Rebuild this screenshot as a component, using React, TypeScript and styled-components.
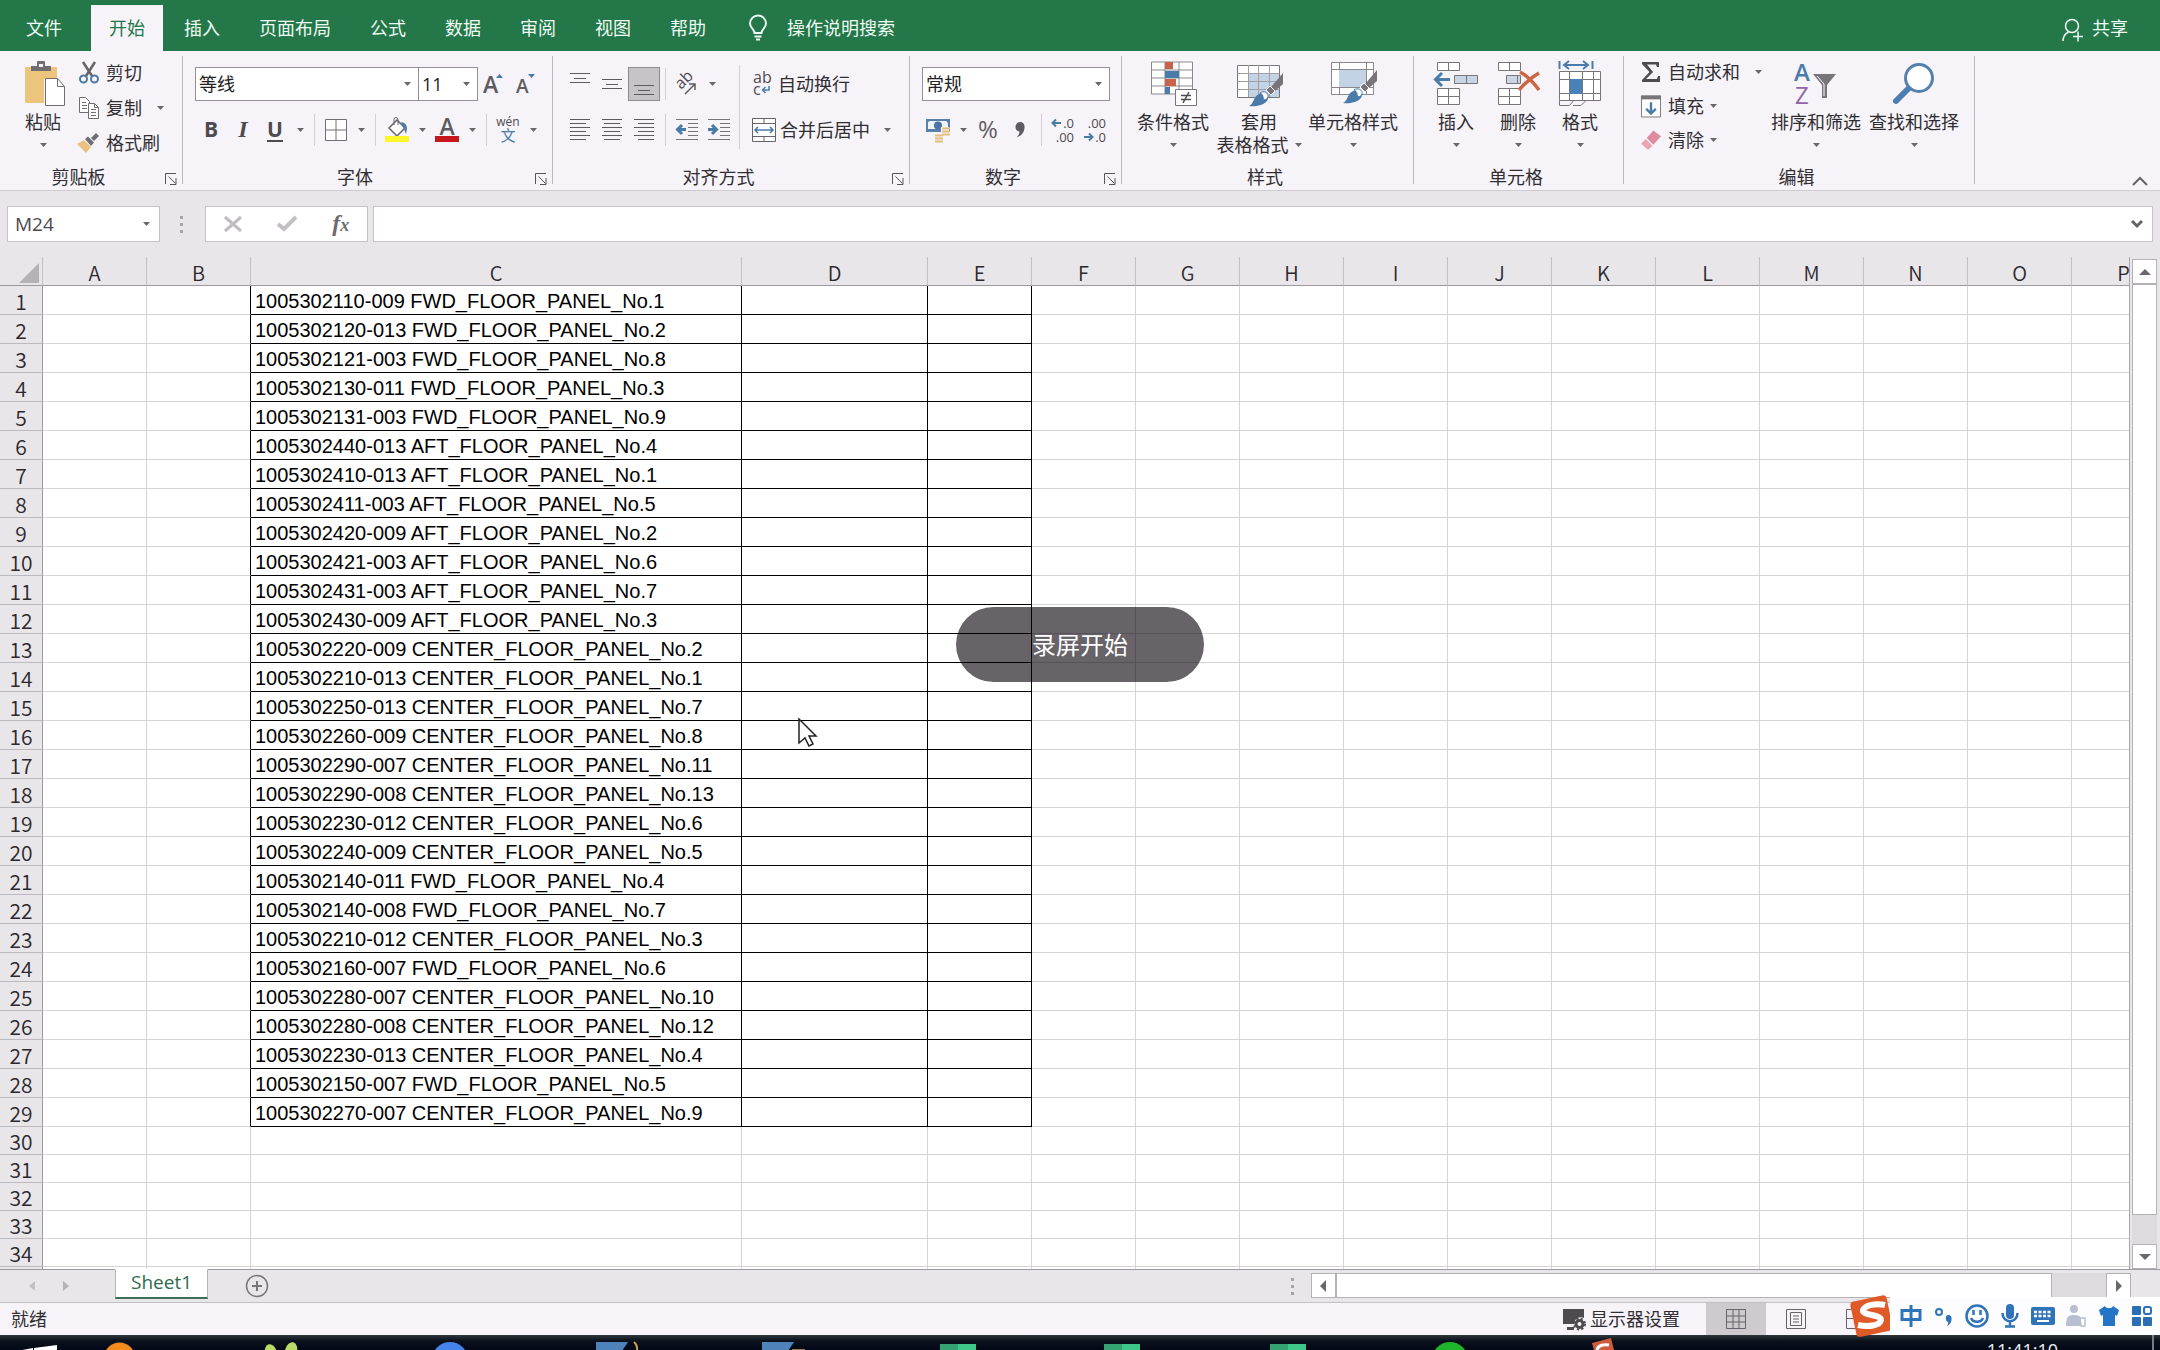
import React from "react";
import styled, { createGlobalStyle } from "styled-components";

const UI_FONT = '"Open Sans", "Noto Sans CJK SC", sans-serif';
const SHEET_FONT = '"Noto Sans CJK SC", sans-serif';
const GREEN = "#237749";
const BLUE = "#4a7ba6";
const INK = "#5f5c61";
const CHROME = "#e9e6ea";
const RIBBON = "#f7f4f9";

const GlobalStyle = createGlobalStyle`
  *, *::before, *::after { box-sizing: border-box; }
  body { margin: 0; overflow: hidden; }
  button, input, select {
    margin: 0; padding: 0; border: 0; background: none;
    font: inherit; color: inherit; outline: none; appearance: none;
  }
  svg { display: block; flex: none; overflow: visible; }
`;

const Window = styled.div`
  display: flex;
  flex-direction: column;
  height: 100vh;
  overflow: hidden;
  background: ${CHROME};
  color: #302e33;
  font: 18px/24px ${UI_FONT};
`;

/* ---------- title tabs ---------- */

const TabStrip = styled.nav`
  display: flex;
  align-items: stretch;
  height: 51px;
  flex: none;
  padding-top: 5px;
  background: ${GREEN};
  color: #eefbf2;
`;

const FileTab = styled.button`
  padding: 0 29px 0 26px;
`;

const Tab = styled.button<{ $active?: boolean }>`
  padding: 0 18px;
  margin-right: 3px;
  background: ${(p) => (p.$active ? RIBBON : "transparent")};
  color: ${(p) => (p.$active ? GREEN : "inherit")};
`;

const TellMe = styled.button`
  display: flex;
  align-items: center;
  gap: 20px;
  margin-left: 22px;
`;

const Share = styled.button`
  display: flex;
  align-items: center;
  gap: 8px;
  margin-left: auto;
  margin-right: 32px;
`;

/* ---------- ribbon ---------- */

const Ribbon = styled.div`
  display: flex;
  flex: none;
  height: 140px;
  padding-top: 4px;
  background: ${RIBBON};
  border-bottom: 1px solid #cfccd1;
`;

const GroupBox = styled.section<{ $width: number }>`
  display: flex;
  flex-direction: column;
  width: ${(p) => p.$width}px;
  flex: none;
`;

const GroupBody = styled.div<{ $pad: number }>`
  display: flex;
  height: 105px;
  padding-left: ${(p) => p.$pad}px;
`;

const GroupFooter = styled.div`
  display: flex;
  align-items: center;
  height: 30px;
  padding: 3px 5px 0 0;
`;

const GroupName = styled.span`
  flex: 1;
  text-align: center;
`;

const Launcher = styled.button`
  width: 12px;
  height: 12px;
  margin: 4px 0 0 8px;
`;

const GroupDivider = styled.div`
  width: 1px;
  height: 128px;
  margin-top: 1px;
  flex: none;
  background: #bab7bc;
`;

const Rows = styled.div`
  display: flex;
  flex-direction: column;
  gap: 10px;
  padding-top: 12px;
`;

const ToolRow = styled.div<{ $low?: boolean }>`
  display: flex;
  align-items: center;
  height: ${(p) => (p.$low ? 38 : 34)}px;
`;

const Tool = styled.button<{ $active?: boolean }>`
  display: flex;
  align-items: center;
  justify-content: center;
  width: 32px;
  height: 34px;
  border: 1px solid ${(p) => (p.$active ? "#8d8b8f" : "transparent")};
  background: ${(p) => (p.$active ? "#c6c4c8" : "none")};
`;

const DropTool = styled(Tool)`
  width: 18px;
`;

const TextTool = styled.button`
  display: flex;
  align-items: center;
  gap: 4px;
  padding-left: 8px;
`;

const Letter = styled.span<{ $kind: "b" | "i" | "u" }>`
  font-family: ${(p) => (p.$kind === "i" ? '"Liberation Serif", serif' : UI_FONT)};
  font-size: ${(p) => (p.$kind === "i" ? 24 : 21)}px;
  font-weight: 700;
  font-style: ${(p) => (p.$kind === "i" ? "italic" : "normal")};
  line-height: 22px;
  border-bottom: 2px solid ${(p) => (p.$kind === "u" ? "#4d4a50" : "transparent")};
  color: #4d4a50;
`;

const ThinDivider = styled.div<{ $tall?: boolean }>`
  width: 1px;
  height: ${(p) => (p.$tall ? 84 : 32)}px;
  margin: ${(p) => (p.$tall ? "10px 4px 0" : "0 5px")};
  background: #d3d0d5;
`;

const SelectBox = styled.label<{ $width: number; $joined?: boolean }>`
  display: flex;
  align-items: center;
  width: ${(p) => p.$width}px;
  height: 34px;
  padding: 0 7px 0 3px;
  margin-left: ${(p) => (p.$joined ? -1 : 0)}px;
  background: #fff;
  border: 1px solid #949196;
  select { flex: 1; min-width: 0; height: 32px; color: #222; }
`;

const LargeButton = styled.button<{ $width: number }>`
  display: flex;
  flex-direction: column;
  align-items: center;
  width: ${(p) => p.$width}px;
  padding-top: 5px;
  white-space: nowrap;
`;

const LargeIcon = styled.span`
  display: flex;
  align-items: center;
  height: 48px;
  margin-bottom: 2px;
`;

const LargeLine = styled.span`
  display: flex;
  align-items: center;
  gap: 6px;
  height: 23px;
`;

const Stack = styled.div<{ $width: number; $row: number }>`
  display: flex;
  flex-direction: column;
  width: ${(p) => p.$width}px;
  > button { height: ${(p) => p.$row}px; }
`;

const SmallButton = styled.button<{ $gap?: number }>`
  display: flex;
  align-items: center;
  white-space: nowrap;
  span { margin: 0 ${(p) => p.$gap ?? 6}px 0 7px; }
`;

const Collapse = styled.button`
  margin: 118px 12px 0 auto;
  width: 16px;
  height: 16px;
`;

/* ---------- formula bar ---------- */

const FormulaBar = styled.div`
  display: flex;
  flex: none;
  height: 66px;
  padding: 15px 7px;
  color: #4b484e;
`;

const Field = styled.label<{ $width?: number }>`
  display: flex;
  align-items: center;
  justify-content: space-between;
  ${(p) => (p.$width ? `width: ${p.$width}px; flex: none;` : "flex: 1;")}
  padding: 0 9px 0 7px;
  background: #fff;
  border: 1px solid #c6c3c8;
  input { flex: 1; min-width: 0; font-size: 19px; }
`;

const Grip = styled.div<{ $margin: string }>`
  display: flex;
  flex-direction: column;
  justify-content: center;
  gap: 4px;
  margin: ${(p) => p.$margin};
  &::before, &::after { content: ""; }
  i, &::before, &::after { width: 3px; height: 3px; background: #a7a4a9; }
`;

const FormulaButtons = styled.div`
  display: flex;
  align-items: center;
  justify-content: space-around;
  width: 163px;
  margin-right: 5px;
  background: #fff;
  border: 1px solid #c6c3c8;
`;

const Fx = styled.span`
  font: italic 700 24px/24px "Liberation Serif", serif;
  color: #6d6a70;
  small { font-size: 18px; }
`;

/* ---------- sheet ---------- */

const SheetArea = styled.div`
  display: flex;
  flex: 1;
  min-height: 0;
`;

const GridPane = styled.div`
  flex: 1;
  min-width: 0;
  overflow: hidden;
  border-right: 1px solid #aaa7ac;
`;

const Grid = styled.table`
  table-layout: fixed;
  width: 0;
  border-collapse: separate;
  border-spacing: 0;
  background: #fff;
  font: 20px/25px ${SHEET_FONT};
  color: #2b292e;
  th { padding: 2px 0 0; font-weight: 350; background: ${CHROME}; text-align: center; }
`;

const HeadCell = styled.th`
  height: 29px;
  border-right: 1px solid #c3c0c5;
  border-bottom: 1px solid #9d9a9f;
`;

const CornerMark = styled.svg`
  margin: 1px 3px 0 auto;
`;

const RowHead = styled.th`
  font-size: 21px;
  border-right: 1px solid #9d9a9f;
  border-bottom: 1px solid #bdbabf;
`;

const Row = styled.tr<{ $tall: boolean }>`
  height: ${(p) => (p.$tall ? 29 : 28)}px;
`;

const Cell = styled.td<{ $right: boolean; $bottom: boolean }>`
  padding: 2px 0 0 4px;
  overflow: hidden;
  white-space: nowrap;
  font: 20px/25px "Liberation Sans", Arial, sans-serif;
  color: #000;
  border-right: 1px solid ${(p) => (p.$right ? "#000" : "#d4d4d4")};
  border-bottom: 1px solid ${(p) => (p.$bottom ? "#000" : "#d4d4d4")};
`;

const VScroll = styled.div`
  display: flex;
  flex-direction: column;
  width: 30px;
  padding: 2px 3px 0 2px;
`;

const ScrollButton = styled.button`
  display: flex;
  align-items: center;
  justify-content: center;
  width: 25px;
  height: 25px;
  flex: none;
  background: #fff;
  border: 1px solid #b5b2b7;
`;

const Track = styled.div<{ $vertical?: boolean }>`
  display: flex;
  flex: 1;
  flex-direction: ${(p) => (p.$vertical ? "column" : "row")};
  background: #dedbdf;
`;

const Thumb = styled.div<{ $share: number }>`
  flex: 0 0 ${(p) => p.$share}%;
  background: #fff;
  border: 1px solid #b5b2b7;
`;

/* ---------- sheet tabs ---------- */

const SheetBar = styled.div`
  display: flex;
  align-items: stretch;
  flex: none;
  height: 34px;
  padding-right: 29px;
  border-top: 1px solid #9d9a9f;
  border-bottom: 1px solid #c3c0c5;
`;

const NavArrows = styled.div`
  display: flex;
  align-items: center;
  gap: 28px;
  width: 115px;
  padding-left: 29px;
`;

const SheetTab = styled.button`
  width: 93px;
  height: 30px;
  margin-top: -1px;
  padding-bottom: 4px;
  background: #fff;
  border: 1px solid #b5b2b7;
  border-top-color: #fff;
  border-bottom: 2px solid #3b6e54;
  color: #2f6b4c;
  font-size: 19px;
`;

const AddSheet = styled.button`
  margin-left: 37px;
`;

const HScroll = styled.div`
  display: flex;
  width: 38.5%;
  height: 25px;
  margin-top: 3px;
`;

/* ---------- status bar ---------- */

const StatusBar = styled.footer`
  display: flex;
  align-items: center;
  flex: none;
  height: 32px;
  padding: 0 274px 0 11px;
  background: ${RIBBON};
`;

const DisplaySettings = styled.button`
  display: flex;
  align-items: center;
  gap: 4px;
  margin-left: auto;
  margin-right: 26px;
`;

const ViewButton = styled.button<{ $active?: boolean }>`
  display: flex;
  align-items: center;
  justify-content: center;
  width: 60px;
  height: 32px;
  background: ${(p) => (p.$active ? "#cecad0" : "none")};
`;

const ImeBar = styled.div`
  position: absolute;
  right: 0;
  bottom: 13px;
  display: flex;
  align-items: center;
  height: 42px;
`;

const ImeTools = styled.div`
  display: flex;
  align-items: center;
  height: 38px;
  margin-left: -4px;
  padding: 0 2px 0 4px;
  background: #fdfcfe;
`;

const ImeButton = styled.button`
  display: flex;
  align-items: center;
  justify-content: center;
  width: 33px;
  height: 34px;
`;

const Taskbar = styled.div`
  position: relative;
  flex: none;
  height: 15px;
  overflow: hidden;
  background: linear-gradient(#30363c, #0a111c 6px, #020816);
`;

const TaskIcon = styled.span<{ $x: number; $top: number }>`
  position: absolute;
  left: ${(p) => p.$x}%;
  top: ${(p) => p.$top}px;
`;

const Clock = styled.time`
  position: absolute;
  right: 102px;
  top: 3px;
  color: #eceef2;
  font: 18px/24px ${UI_FONT};
`;

const Peek = styled.span`
  position: absolute;
  right: 6px;
  top: 0;
  width: 2px;
  height: 15px;
  background: #777d86;
`;

const Toast = styled.div`
  position: absolute;
  left: 50%;
  top: 45%;
  transform: translate(-50%, -1px);
  padding: 19px 76px 20px;
  border-radius: 38px;
  background: rgba(6, 0, 8, 0.61);
  color: #fff;
  font: 24px/36px ${SHEET_FONT};
  white-space: nowrap;
`;

const Pointer = styled.svg`
  position: absolute;
  left: 797px;
  top: 717px;
`;

/* ---------- icons ---------- */

const Caret = () => (
  <svg width="7" height="4" viewBox="0 0 7 4"><path d="M0 0h7L3.500 4z" fill="#6a676c" /></svg>
);

const Arrow = ({ dir, color = "#6a676c" }: { dir: number; color?: string }) => (
  <svg width="12" height="12" viewBox="-6 -6 12 12">
    <path d="M-6 3L0 -3L6 3z" fill={color} transform={`rotate(${dir})`} />
  </svg>
);

const LauncherIcon = () => (
  <svg width="12" height="12" fill="none" stroke="#59565b">
    <path d="M.5 11V.5H11M3.500 3.500l7 7M11 5v6.500H5" />
  </svg>
);

const BulbIcon = () => (
  <svg width="18" height="26" viewBox="0 0 18 26" fill="none" stroke="#eefbf2" strokeWidth="2">
    <path d="M5.500 18c0-4-4.500-5-4.500-9.500a8 8 0 0116 0c0 4.500-4.500 5.500-4.500 9.500z" />
    <path d="M5.500 21.500h7M7 24.500h4" />
  </svg>
);

const ShareIcon = () => (
  <svg width="22" height="20" viewBox="0 2 22 20" fill="none" stroke="#eefbf2" strokeWidth="1.500">
    <circle cx="10" cy="10" r="6.500" />
    <path d="M1 25c0-5 2.500-7.500 5.500-9M16 15.500v10M11 20.500h10" />
  </svg>
);

const PasteIcon = () => (
  <svg width="42" height="46" viewBox="-2 0 42 46">
    <path d="M2 6h30a1 1 0 011 1v11H20v24H2a1 1 0 01-1-1V7a1 1 0 011-1z" fill="#ecc57d" />
    <path d="M7 10V5h6V1a1 1 0 011-1h6a1 1 0 011 1v4h6v5z" fill="#716e73" />
    <rect x="15" y="3" width="4" height="3" fill="#f7f4f9" />
    <path d="M21.500 17.500h12l7 8v19h-19z" fill="#fff" stroke="#716e73" />
    <path d="M33.500 17.500v8h7" fill="none" stroke="#716e73" />
  </svg>
);

const CutIcon = () => (
  <svg width="20" height="22" viewBox="0 0 20 22" fill="none">
    <path d="M4 0l9 14M16 0L7 14" stroke="#66636a" strokeWidth="2.500" />
    <circle cx="4.500" cy="17" r="3.500" stroke={BLUE} strokeWidth="2" />
    <circle cx="15.500" cy="17" r="3.500" stroke={BLUE} strokeWidth="2" />
  </svg>
);

const CopyIcon = () => (
  <svg width="20" height="22" viewBox="0 0 20 22" fill="#fff" stroke="#716e73">
    <path d="M.5.500h6l4 4v11H.5zM3 5.500h4M3 8.500h5M3 11.500h5" />
    <path d="M9.500 6.500h6l4 4v11h-10zM15.500 6.500v4h4M12 12.500h5M12 15.500h5M12 18.500h5" />
  </svg>
);

const BrushIcon = () => (
  <svg width="22" height="20" viewBox="0 0 22 20">
    <path d="M0 11l7-4 7 7-5 6z" fill="#eac180" />
    <path d="M8 6l3-2.500 6 6L14 13z" fill="#716e73" />
    <path d="M14 5l5-5 3 3-5 5z" fill="#716e73" />
  </svg>
);

const GrowFont = ({ small }: { small?: boolean }) => (
  <svg width="24" height="28" viewBox="0 0 24 28">
    <text x={small ? 2 : 1} y="23" fontSize={small ? 19 : 23} fontWeight="600" fill={INK} fontFamily="Open Sans">A</text>
    {small ? <path d="M14 4h7l-3.500 4z" fill={BLUE} /> : <path d="M14 8h7l-3.500-4z" fill={BLUE} />}
  </svg>
);

const BordersIcon = () => (
  <svg width="22" height="22" fill="#fff" stroke="#716e73"><path d="M.5.500h21v21H.5zM11 0v22M0 11h22" /></svg>
);

const FillIcon = () => (
  <svg width="24" height="26" viewBox="0 0 24 26">
    <path d="M4 11l8-8 8 8-8 8z" fill="#fff" stroke="#66636a" strokeWidth="1.500" />
    <path d="M9 8V2.500a2 2 0 014 0V8" fill="none" stroke="#66636a" />
    <path d="M16 5c6 1 7 5 5 12l-2-5z" fill={BLUE} />
    <rect y="19" width="24" height="6" fill="#fdf62b" />
  </svg>
);

const FontColorIcon = () => (
  <svg width="24" height="26" viewBox="0 0 24 26">
    <text x="12" y="18" textAnchor="middle" fontSize="23" fontWeight="600" fill={INK} fontFamily="Open Sans">A</text>
    <rect y="19" width="24" height="6" fill="#c8161d" />
  </svg>
);

const PhoneticIcon = () => (
  <svg width="24" height="28" viewBox="0 0 24 28">
    <text x="12" y="10" textAnchor="middle" fontSize="12" fill="#4d4a50" fontFamily="Open Sans">wén</text>
    <text x="12" y="25" textAnchor="middle" fontSize="15" fill={BLUE} fontFamily="Noto Sans CJK SC">文</text>
  </svg>
);

const LinesIcon = ({ lines }: { lines: [number, number, number][] }) => (
  <svg width="20" height="24" stroke="#5f5c61">
    {lines.map(([x, y, w]) => <path key={y} d={`M${x} ${y + 0.5}h${w}`} />)}
  </svg>
);

const paragraph = (shift: (w: number) => number): [number, number, number][] =>
  [20, 16, 20, 16, 20, 16].map((w, i) => [shift(w), 1 + i * 4, w]);

const IndentIcon = ({ out }: { out?: boolean }) => (
  <svg width="22" height="24" viewBox="0 0 22 24" fill="none">
    <path d="M0 1.500h22M12 5.500h10M12 9.500h10M12 13.500h10M12 17.500h10M0 21.500h22" stroke="#77747a" />
    <path d={out ? "M10 11.500H2M6 7l-4.500 4.500L6 16" : "M0 11.500h8M4 7l4.500 4.500L4 16"} stroke={BLUE} strokeWidth="3" />
  </svg>
);

const OrientIcon = () => (
  <svg width="24" height="24" viewBox="0 0 24 24">
    <text x="0" y="0" fontSize="16" fill="#4d4a50" fontFamily="Open Sans" transform="translate(6 18) rotate(-45)">ab</text>
    <path d="M10 22L20 12M20 18v-6h-6" fill="none" stroke="#5f5c61" strokeWidth="1.500" />
  </svg>
);

const WrapIcon = () => (
  <svg width="22" height="26" viewBox="0 0 22 26">
    <text x="1" y="12" fontSize="16" fill="#4d4a50" fontFamily="Open Sans">ab</text>
    <text x="1" y="24" fontSize="16" fill="#4d4a50" fontFamily="Open Sans">c</text>
    <path d="M17 15v4h-6M13.500 16l-3 3 3 3" fill="none" stroke={BLUE} strokeWidth="1.500" />
  </svg>
);

const MergeIcon = () => (
  <svg width="24" height="24" viewBox="0 0 24 24" fill="none">
    <path d="M.5.500h23v23H.500zM.5 5.500h23M.5 18.500h23M12 0v5M12 19v5" fill="#fff" stroke="#66636a" />
    <path d="M3 12h18M6 9l-3 3 3 3M18 9l3 3-3 3" stroke={BLUE} strokeWidth="1.500" />
  </svg>
);

const MoneyIcon = () => (
  <svg width="24" height="24" viewBox="0 0 24 24">
    <path d="M0 1h24v13H0z" fill="#5b80a8" />
    <path d="M2 4l2-1h16l2 2v6H2z" fill="#eef3f8" />
    <circle cx="12" cy="7.500" r="4" fill="#4a74a3" />
    <path d="M15 9h8v10h-6v4H8v-7h7z" fill="#f7f4f9" />
    <path d="M16 10.500h8M16 13.500h8M16 16.500h8M9 17.500h8M9 20.500h8M9 23.500h8" stroke="#e3be7c" strokeWidth="2" />
  </svg>
);

const PercentIcon = () => (
  <svg width="24" height="26" viewBox="0 0 24 26">
    <text x="12" y="21" textAnchor="middle" fontSize="24" fill="#5f5c61" fontFamily="Open Sans">%</text>
  </svg>
);

const CommaIcon = () => (
  <svg width="10" height="16" viewBox="0 0 10 16"><path d="M5 0c3 0 5 2 4.500 6C9 11 6 14 1.500 15.500c2-2 3-4 3-6C2 9.500.5 7.500.5 5S2.500 0 5 0z" fill={INK} /></svg>
);

const DecimalIcon = ({ less }: { less?: boolean }) => (
  <svg width="24" height="26" viewBox="1 0 24 26" fontFamily="Open Sans" fontSize="13" fill="#4d4a50">
    <text x="24" y="11" textAnchor="end">{less ? ".00" : ".0"}</text>
    <text x="24" y="25" textAnchor="end">{less ? ".0" : ".00"}</text>
    <path d={less ? "M2 20h8M7 16.500l3.500 3.500L7 23.500" : "M11 6H3M6 2.500L2.500 6 6 9.500"} fill="none" stroke={BLUE} strokeWidth="2" />
  </svg>
);

const CondFormatIcon = () => (
  <svg width="46" height="46" viewBox="-1 0 46 46">
    <path d="M.5 1h41v32H.500zM.5 9h41M.5 17h41M.5 25h41M14 1v32M28 1v32" fill="#fff" stroke="#8b888d" />
    <path d="M14 1h8v7h-8zM14 18h11v7H14z" fill="#c8634a" />
    <path d="M14 10h14v7H14zM14 26h5v7h-5z" fill="#4a7bab" />
    <path d="M24.500 28.500h21v16h-21z" fill="#fff" stroke="#77747a" />
    <path d="M30 34.500h10M30 38.500h10M38 31l-6 11" stroke="#4d4a50" strokeWidth="1.500" />
  </svg>
);

const Paintbrush = () => (
  <g>
    <path d="M46 12v11l-8 7-4-4z" fill="#77747a" />
    <path d="M33 25l5 5-4 4-5-5z" fill="#77747a" stroke="#fff" />
    <path d="M12 45c5-2 4-9 10-12 5-2 10 1 9 5-2 6-12 8-19 7z" fill="#4a7bab" />
    <path d="M23 32c4-3 9 0 8 4-2 4-5 3-5 0 0-2-1-3-3-4z" fill="#fff" stroke="#4a7bab" />
  </g>
);

const TableFormatIcon = () => (
  <svg width="46" height="46" viewBox="-1 0 46 46">
    <path d="M.5 4.500h42v32h-42z" fill="#fff" stroke="#77747a" />
    <path d="M11 12h31v24H11z" fill="#c3d3e6" />
    <path d="M.5 12.500h42M.5 20.500h42M.5 28.500h42M11.500 4v32M21.500 4v32M32.500 4v32" stroke="#a19ea4" />
    <Paintbrush />
  </svg>
);

const CellStyleIcon = () => (
  <svg width="46" height="46" viewBox="-1 0 46 46">
    <path d="M.5 1.500h42v32h-42zM.5 8.500h42M.5 26.500h42M8.500 1v32M35.500 1v32" fill="#fff" stroke="#8b888d" />
    <path d="M8 9h27v17H8z" fill="#c3d3e6" />
    <g transform="translate(0 -3)"><Paintbrush /></g>
  </svg>
);

const InsertIcon = () => (
  <svg width="46" height="46" viewBox="0 0 46 46" fill="#fff" stroke="#77747a">
    <path d="M4.500 1.500h22v8h-22zM15.500 1v8M4.500 27.500h22v16h-22zM4.500 35.500h22M15.500 27v16" />
    <path d="M21.500 14.500h23v8h-23zM33.500 14v8" fill="#c9d4e4" />
    <path d="M17 18.500H3M9 12l-6.500 6.500L9 25" fill="none" stroke="#4a7bab" strokeWidth="3" />
  </svg>
);

const DeleteIcon = () => (
  <svg width="46" height="46" viewBox="0 0 46 46" fill="#fff" stroke="#77747a">
    <path d="M3.500 1.500h22v8h-22zM14.500 1v8M3.500 27.500h22v16h-22zM3.500 35.500h22M14.500 27v16" />
    <path d="M11.500 14.500h14v8h-14zM22.500 14v8" fill="#c9d4e4" />
    <path d="M25 11c6 3 13 10 19 18M44 12c-7 4-14 10-20 17" fill="none" stroke="#cc6544" strokeWidth="3.500" />
  </svg>
);

const FormatIcon = () => (
  <svg width="46" height="46" viewBox="1 0 46 46" fill="#fff" stroke="#77747a">
    <path d="M3.500 10.500h41v29h-41zM3.500 18.500h41M3.500 32.500h41M13.500 10v29M26.500 10v29M37.500 10v29" />
    <path d="M3.500 39.500v5h10l4-5M17 44.500h8l5-5" fill="none" />
    <path d="M14 18h12v15H14z" fill="#4a80b8" stroke="none" />
    <path d="M3.500 0v8M36.500 0v8M8 4h24M13 0L8 4l5 4M27 0l5 4-5 4" fill="none" stroke="#4a7bab" strokeWidth="2" />
  </svg>
);

const SigmaIcon = () => (
  <svg width="20" height="20" viewBox="0 0 20 20">
    <path d="M1 0h17v5h-2l-1-2.500H6L12 10l-7 7h11l1-3h2v6H1v-2l7.500-8L1 2z" fill="#4d4a50" />
  </svg>
);

const FillDownIcon = () => (
  <svg width="20" height="23" viewBox="0 0 21 23" fill="none">
    <path d="M.5.500h20v22H.500z" fill="#fff" stroke="#77747a" />
    <path d="M0 0h21v4H0z" fill="#77747a" />
    <path d="M10.500 7v12M5.500 14l5 5 5-5" stroke={BLUE} strokeWidth="2.500" />
  </svg>
);

const EraserIcon = () => (
  <svg width="20" height="20" viewBox="0 0 21 20">
    <path d="M13 0l8 6-8 9-7-7z" fill="#df8ba0" />
    <path d="M5 9l7 7-4 4-1 0-7-6z" fill="#e8a5b4" />
  </svg>
);

const SortIcon = () => (
  <svg width="44" height="42" viewBox="0 0 44 42" fontFamily="Open Sans" fontSize="24" fontWeight="600">
    <text x="0" y="18" fill="#4a7bab">A</text>
    <text x="1" y="41" fontWeight="400" fill="#9263a8">Z</text>
    <path d="M19 11h23L33 22v13h-5V22z" fill="#77747a" />
    <path d="M23 13l7 8v12" fill="none" stroke="#fff" />
  </svg>
);

const FindIcon = () => (
  <svg width="42" height="42" viewBox="0 0 42 42" fill="none">
    <path d="M17 24L3 38" stroke="#4d7eb3" strokeWidth="6" strokeLinecap="round" />
    <circle cx="26" cy="15" r="13.500" fill="#fff" stroke="#5580ad" strokeWidth="3" />
  </svg>
);

const CrossIcon = () => (
  <svg width="18" height="16" fill="none" stroke="#bfbcc1" strokeWidth="3"><path d="M1 1l16 14M17 1L1 15" /></svg>
);

const CheckIcon = () => (
  <svg width="20" height="16" fill="none" stroke="#c3c0c5" strokeWidth="4"><path d="M1 8l6 5L19 1" /></svg>
);

const Chevron = ({ up }: { up?: boolean }) => (
  <svg width={up ? 16 : 12} height="9" viewBox={up ? "0 0 16 9" : "0 0 12 9"} fill="none" stroke="#66636a" strokeWidth={up ? 2 : 3}>
    <path d={up ? "M1 8l7-7 7 7" : "M1 1l5 5 5-5"} />
  </svg>
);

const DisplayIcon = () => (
  <svg width="23" height="21" viewBox="0 0 23 21">
    <path d="M0 0h21v9a7 7 0 00-10 6H0z" fill="#4d4a50" />
    <path d="M4 18h7v3H4z" fill="#4d4a50" />
    <circle cx="16.500" cy="15" r="3.500" fill="none" stroke="#4d4a50" strokeWidth="3" />
    <circle cx="16.500" cy="15" r="5.500" fill="none" stroke="#4d4a50" strokeWidth="2" strokeDasharray="2.200 2.200" />
  </svg>
);

const NormalView = () => (
  <svg width="20" height="20" fill="none" stroke="#66636a"><path d="M.5.500h19v19H.500zM.5 7h19M.5 13h19M7 0v20M13 0v20" /></svg>
);
const PageView = () => (
  <svg width="20" height="20" fill="none" stroke="#66636a"><path d="M.5.500h19v19H.500zM4.500 3.500h11v13h-11zM7 7h6M7 10h6M7 13h6" /></svg>
);
const BreakView = () => (
  <svg width="20" height="20" fill="none" stroke="#66636a"><path d="M.5.500h19v19H.500zM0 9.500h20M10 0v9" /></svg>
);

const SogouLogo = () => (
  <svg width="44" height="42" viewBox="0 0 44 42">
    <rect x="3" y="3" width="37" height="36" rx="4" fill="#e05a28" transform="rotate(-12 22 21)" />
    <path d="M35 10c-9-2-20 0-22 5-1 6 18 4 18 10-1 6-13 7-23 5" fill="none" stroke="#fff" strokeWidth="6" />
  </svg>
);

const IME = "#2f74b8";
const imeIcons: [string, React.ReactNode][] = [
  ["中文", <svg width="22" height="22" fill="none" stroke={IME} strokeWidth="3"><path d="M2 5.500h18v9H2zM11 0v22" /></svg>],
  ["标点", <svg width="20" height="20" viewBox="0 0 20 20"><circle cx="5" cy="6" r="3" fill="none" stroke={IME} strokeWidth="2" /><path d="M14 9c3 0 4 2 3.500 5-.5 3-2 5-4.500 6 1-2 1.500-3 1-4-3-1-3-7 0-7z" fill={IME} /></svg>],
  ["表情", <svg width="24" height="24" fill="none" stroke={IME} strokeWidth="2.500"><circle cx="12" cy="12" r="10.500" /><path d="M8.500 6v5M15.500 6v5M6 14c2 5 10 5 12 0" /></svg>],
  ["语音", <svg width="18" height="24" viewBox="0 0 18 24"><rect x="5" width="8" height="15" rx="4" fill={IME} /><path d="M1.500 9c0 11 15 11 15 0M9 17v5M4 22.500h10" fill="none" stroke={IME} strokeWidth="2.500" /></svg>],
  ["键盘", <svg width="24" height="18" viewBox="0 0 24 18"><rect width="24" height="18" rx="2" fill={IME} /><path d="M3 5h18M3 9h18" stroke="#fff" strokeWidth="2.500" strokeDasharray="3 1.500" /><path d="M6 14h12" stroke="#fff" strokeWidth="2" /></svg>],
  ["账户", <svg width="22" height="22" viewBox="0 0 22 22"><circle cx="9" cy="4" r="4" fill="#b9bfd0" /><path d="M1 21c0-9 2-11 8-11 4 0 6 1 7 3v8z" fill="#b9bfd0" /><path d="M15 13h5v8h-4z" fill="#fff" stroke="#b9bfd0" strokeWidth="1.500" /></svg>],
  ["皮肤", <svg width="20" height="20" viewBox="0 0 20 20"><path d="M6 0c1 3 7 3 8 0l6 4-2 6-2-1v11H4V9l-2 1-2-6z" fill="#2474c8" /></svg>],
  ["工具箱", <svg width="20" height="20" viewBox="0 0 20 20" fill="#2a6eb5"><rect width="9" height="9" rx="1" /><rect y="11" width="9" height="9" rx="1" /><rect x="11" y="11" width="9" height="9" rx="1" /><rect x="12" y="1" width="7" height="7" rx="2" fill="#fff" stroke="#2a6eb5" strokeWidth="2" /></svg>],
];

const taskIcons: [number, number, React.ReactNode][] = [
  [0.8, 10, <svg width="40" height="6"><path d="M0 6l16-3v3zM17 3l23-3v6H17z" fill="#fff" /></svg>],
  [4.8, 7, <svg width="31" height="16"><circle cx="15.500" cy="16" r="15.500" fill="#f28a1e" /></svg>],
  [12.2, 7, <svg width="34" height="16" fill="#b9dc69"><ellipse cx="7" cy="11" rx="6" ry="9" transform="rotate(-15 7 11)" /><ellipse cx="27" cy="9" rx="6" ry="9" transform="rotate(15 27 9)" /></svg>],
  [20, 7, <svg width="36" height="16"><circle cx="18" cy="18" r="18" fill="#4582ea" /></svg>],
  [27.6, 6, <svg width="44" height="16"><path d="M0 1h32L22 16H0z" fill="#4d83b8" /><path d="M38 1q5 4 2 12" stroke="#c99b55" strokeWidth="2" fill="none" /></svg>],
  [35.3, 6, <svg width="44" height="16"><path d="M0 1h32L22 16H0z" fill="#4d83b8" /><path d="M30 9h13" stroke="#9b7c50" strokeWidth="2" fill="none" /></svg>],
  ...[43.5, 51.1, 58.8].map((x): [number, number, React.ReactNode] => [
    x, 9, <svg width="36" height="8"><path d="M0 0h18v8H0z" fill="#35a371" /><path d="M18 0h18v8H18z" fill="#3cc788" /></svg>,
  ]),
  [66.3, 7, <svg width="36" height="16"><circle cx="18" cy="18" r="18" fill="#1fb52a" /></svg>],
  [73.7, 3, <svg width="24" height="16"><path d="M0 5l19-5 4 16H3z" fill="#cf5a3c" /><path d="M5 12c1-5 7-6 12-5" stroke="#fff" strokeWidth="3" fill="none" /></svg>],
];

/* ---------- composed parts ---------- */

type GroupProps = { name: string; width: number; pad: number; launcher?: boolean; children: React.ReactNode };

const Group = ({ name, width, pad, launcher, children }: GroupProps) => (
  <>
    <GroupBox $width={width}>
      <GroupBody $pad={pad}>{children}</GroupBody>
      <GroupFooter>
        <GroupName>{name}</GroupName>
        {launcher && <Launcher aria-label={`${name}设置`}><LauncherIcon /></Launcher>}
      </GroupFooter>
    </GroupBox>
    <GroupDivider />
  </>
);

const Large = ({ icon, text, second, width }: { icon: React.ReactNode; text: string; second?: string; width: number }) => (
  <LargeButton $width={width}>
    <LargeIcon>{icon}</LargeIcon>
    <LargeLine>{text}</LargeLine>
    <LargeLine>{second}<Caret /></LargeLine>
  </LargeButton>
);

const Picker = ({ label, value, width, joined }: { label: string; value: string; width: number; joined?: boolean }) => (
  <SelectBox $width={width} $joined={joined}>
    <select aria-label={label} defaultValue={value}><option>{value}</option></select>
    <Caret />
  </SelectBox>
);

const Drop = ({ label }: { label: string }) => <DropTool aria-label={label}><Caret /></DropTool>;

/* ---------- data ---------- */

const parts = [
  "1005302110-009 FWD_FLOOR_PANEL_No.1",
  "1005302120-013 FWD_FLOOR_PANEL_No.2",
  "1005302121-003 FWD_FLOOR_PANEL_No.8",
  "1005302130-011 FWD_FLOOR_PANEL_No.3",
  "1005302131-003 FWD_FLOOR_PANEL_No.9",
  "1005302440-013 AFT_FLOOR_PANEL_No.4",
  "1005302410-013 AFT_FLOOR_PANEL_No.1",
  "1005302411-003 AFT_FLOOR_PANEL_No.5",
  "1005302420-009 AFT_FLOOR_PANEL_No.2",
  "1005302421-003 AFT_FLOOR_PANEL_No.6",
  "1005302431-003 AFT_FLOOR_PANEL_No.7",
  "1005302430-009 AFT_FLOOR_PANEL_No.3",
  "1005302220-009 CENTER_FLOOR_PANEL_No.2",
  "1005302210-013 CENTER_FLOOR_PANEL_No.1",
  "1005302250-013 CENTER_FLOOR_PANEL_No.7",
  "1005302260-009 CENTER_FLOOR_PANEL_No.8",
  "1005302290-007 CENTER_FLOOR_PANEL_No.11",
  "1005302290-008 CENTER_FLOOR_PANEL_No.13",
  "1005302230-012 CENTER_FLOOR_PANEL_No.6",
  "1005302240-009 CENTER_FLOOR_PANEL_No.5",
  "1005302140-011 FWD_FLOOR_PANEL_No.4",
  "1005302140-008 FWD_FLOOR_PANEL_No.7",
  "1005302210-012 CENTER_FLOOR_PANEL_No.3",
  "1005302160-007 FWD_FLOOR_PANEL_No.6",
  "1005302280-007 CENTER_FLOOR_PANEL_No.10",
  "1005302280-008 CENTER_FLOOR_PANEL_No.12",
  "1005302230-013 CENTER_FLOOR_PANEL_No.4",
  "1005302150-007 FWD_FLOOR_PANEL_No.5",
  "1005302270-007 CENTER_FLOOR_PANEL_No.9",
];

const columns = "ABCDEFGHIJKLMNOP".split("");
const columnWidth = (name: string) => (name === "C" ? 491 : name === "D" ? 186 : 104);
const rowCount = 34;

const Spreadsheet = () => (
  <Grid>
    <colgroup>
      <col style={{ width: 43 }} />
      {columns.map((c) => <col key={c} style={{ width: columnWidth(c) }} />)}
    </colgroup>
    <thead>
      <tr>
        <HeadCell>
          <CornerMark width="20" height="20"><path d="M20 0v20H0z" fill="#b5b2b7" /></CornerMark>
        </HeadCell>
        {columns.map((c) => <HeadCell key={c} scope="col">{c}</HeadCell>)}
      </tr>
    </thead>
    <tbody>
      {Array.from({ length: rowCount + 1 }, (_, r) => {
        const filled = r < parts.length;
        return (
          <Row key={r} $tall={filled}>
            <RowHead scope="row">{r < rowCount ? r + 1 : null}</RowHead>
            {columns.map((c) => (
              <Cell key={c} $right={filled && "BCDE".includes(c)} $bottom={filled && "CDE".includes(c)}>
                {c === "C" ? parts[r] : null}
              </Cell>
            ))}
          </Row>
        );
      })}
    </tbody>
  </Grid>
);

const tabs = ["开始", "插入", "页面布局", "公式", "数据", "审阅", "视图", "帮助"];

export default function App() {
  return (
    <Window>
      <GlobalStyle />
      <TabStrip>
        <FileTab>文件</FileTab>
        {tabs.map((t, i) => <Tab key={t} $active={i === 0}>{t}</Tab>)}
        <TellMe><BulbIcon />操作说明搜索</TellMe>
        <Share><ShareIcon />共享</Share>
      </TabStrip>

      <Ribbon>
        <Group name="剪贴板" width={182} pad={12} launcher>
          <Large icon={<PasteIcon />} text="粘贴" width={62} />
          <Stack $width={100} $row={35}>
            <SmallButton><svg width="5" height="1" /><CutIcon /><span>剪切</span></SmallButton>
            <SmallButton $gap={15}><svg width="5" height="1" /><CopyIcon /><span>复制</span><Caret /></SmallButton>
            <SmallButton><svg width="3" height="1" /><BrushIcon /><span>格式刷</span></SmallButton>
          </Stack>
        </Group>

        <Group name="字体" width={369} pad={12} launcher>
          <Rows>
            <ToolRow>
              <Picker label="字体" value="等线" width={224} />
              <Picker label="字号" value="11" width={60} joined />
              <Tool aria-label="增大字号"><GrowFont /></Tool>
              <Tool aria-label="减小字号"><GrowFont small /></Tool>
            </ToolRow>
            <ToolRow $low>
              <Tool aria-label="加粗"><Letter $kind="b">B</Letter></Tool>
              <Tool aria-label="倾斜"><Letter $kind="i">I</Letter></Tool>
              <Tool aria-label="下划线"><Letter $kind="u">U</Letter></Tool>
              <Drop label="下划线选项" />
              <ThinDivider />
              <Tool aria-label="边框"><BordersIcon /></Tool>
              <Drop label="边框选项" />
              <ThinDivider />
              <Tool aria-label="填充颜色"><FillIcon /></Tool>
              <Drop label="填充颜色选项" />
              <Tool aria-label="字体颜色"><FontColorIcon /></Tool>
              <Drop label="字体颜色选项" />
              <ThinDivider />
              <Tool aria-label="拼音"><PhoneticIcon /></Tool>
              <Drop label="拼音选项" />
            </ToolRow>
          </Rows>
        </Group>

        <Group name="对齐方式" width={356} pad={11} launcher>
          <Rows>
            <ToolRow>
              <Tool aria-label="顶端对齐"><LinesIcon lines={[[0, 1, 20], [4, 6, 12], [0, 10, 20]]} /></Tool>
              <Tool aria-label="垂直居中"><LinesIcon lines={[[0, 7, 20], [4, 12, 12], [0, 16, 20]]} /></Tool>
              <Tool aria-label="底端对齐" $active><LinesIcon lines={[[0, 13, 20], [4, 18, 12], [0, 22, 20]]} /></Tool>
              <ThinDivider />
              <Tool aria-label="方向"><OrientIcon /></Tool>
              <Drop label="方向选项" />
            </ToolRow>
            <ToolRow $low>
              <Tool aria-label="左对齐"><LinesIcon lines={paragraph(() => 0)} /></Tool>
              <Tool aria-label="居中"><LinesIcon lines={paragraph((w) => (20 - w) / 2)} /></Tool>
              <Tool aria-label="右对齐"><LinesIcon lines={paragraph((w) => 20 - w)} /></Tool>
              <ThinDivider />
              <Tool aria-label="减少缩进"><IndentIcon out /></Tool>
              <Tool aria-label="增加缩进"><IndentIcon /></Tool>
            </ToolRow>
          </Rows>
          <ThinDivider $tall />
          <Rows>
            <ToolRow><TextTool><WrapIcon />自动换行</TextTool></ToolRow>
            <ToolRow $low>
              <TextTool><MergeIcon />合并后居中</TextTool>
              <svg width="8" height="1" />
              <Drop label="合并选项" />
            </ToolRow>
          </Rows>
        </Group>

        <Group name="数字" width={211} pad={12} launcher>
          <Rows>
            <ToolRow><Picker label="数字格式" value="常规" width={188} /></ToolRow>
            <ToolRow $low>
              <Tool aria-label="会计数字格式"><MoneyIcon /></Tool>
              <Drop label="会计格式选项" />
              <Tool aria-label="百分比"><PercentIcon /></Tool>
              <Tool aria-label="千位分隔"><CommaIcon /></Tool>
              <ThinDivider />
              <Tool aria-label="增加小数位"><DecimalIcon /></Tool>
              <Tool aria-label="减少小数位"><DecimalIcon less /></Tool>
            </ToolRow>
          </Rows>
        </Group>

        <Group name="样式" width={291} pad={9}>
          <Large icon={<CondFormatIcon />} text="条件格式" width={84} />
          <Large icon={<TableFormatIcon />} text="套用" second="表格格式" width={88} />
          <Large icon={<CellStyleIcon />} text="单元格样式" width={100} />
        </Group>

        <Group name="单元格" width={209} pad={11}>
          <Large icon={<InsertIcon />} text="插入" width={62} />
          <Large icon={<DeleteIcon />} text="删除" width={62} />
          <Large icon={<FormatIcon />} text="格式" width={62} />
        </Group>

        <Group name="编辑" width={350} pad={17}>
          <Stack $width={126} $row={34}>
            <SmallButton $gap={15}><SigmaIcon /><span>自动求和</span><Caret /></SmallButton>
            <SmallButton><FillDownIcon /><span>填充</span><Caret /></SmallButton>
            <SmallButton><EraserIcon /><span>清除</span><Caret /></SmallButton>
          </Stack>
          <Large icon={<SortIcon />} text="排序和筛选" width={98} />
          <Large icon={<FindIcon />} text="查找和选择" width={98} />
        </Group>

        <Collapse aria-label="折叠功能区"><Chevron up /></Collapse>
      </Ribbon>

      <FormulaBar>
        <Field $width={153}><input aria-label="名称框" defaultValue="M24" /><Caret /></Field>
        <Grip $margin="0 22px 0 20px"><i /></Grip>
        <FormulaButtons>
          <button aria-label="取消"><CrossIcon /></button>
          <button aria-label="输入"><CheckIcon /></button>
          <button aria-label="插入函数"><Fx>f<small>x</small></Fx></button>
        </FormulaButtons>
        <Field><input aria-label="编辑栏" /><Chevron /></Field>
      </FormulaBar>

      <SheetArea>
        <GridPane><Spreadsheet /></GridPane>
        <VScroll>
          <ScrollButton aria-label="向上滚动"><Arrow dir={0} /></ScrollButton>
          <Track $vertical><Thumb $share={97} /></Track>
          <ScrollButton aria-label="向下滚动"><Arrow dir={180} /></ScrollButton>
        </VScroll>
      </SheetArea>

      <SheetBar>
        <NavArrows>
          <svg width="6" height="10"><path d="M6 0v10L0 5z" fill="#c3c0c5" /></svg>
          <svg width="6" height="10"><path d="M0 0v10l6-5z" fill="#b5b2b7" /></svg>
        </NavArrows>
        <SheetTab>Sheet1</SheetTab>
        <AddSheet aria-label="新工作表">
          <svg width="24" height="24" fill="none" stroke="#77747a"><circle cx="12" cy="12" r="10.500" strokeWidth="1.500" /><path d="M12 7v10M7 12h10" strokeWidth="2" /></svg>
        </AddSheet>
        <Grip $margin="0 17px 0 auto"><i /></Grip>
        <HScroll>
          <ScrollButton aria-label="向左滚动"><Arrow dir={-90} /></ScrollButton>
          <Track><Thumb $share={93} /></Track>
          <ScrollButton aria-label="向右滚动"><Arrow dir={90} /></ScrollButton>
        </HScroll>
      </SheetBar>

      <StatusBar>
        就绪
        <DisplaySettings><DisplayIcon />显示器设置</DisplaySettings>
        <ViewButton aria-label="普通" $active><NormalView /></ViewButton>
        <ViewButton aria-label="页面布局"><PageView /></ViewButton>
        <ViewButton aria-label="分页预览"><BreakView /></ViewButton>
      </StatusBar>

      <Taskbar>
        {taskIcons.map(([x, top, icon]) => <TaskIcon key={x} $x={x} $top={top}>{icon}</TaskIcon>)}
        <Clock>11:41:10</Clock>
        <Peek />
      </Taskbar>

      <ImeBar>
        <SogouLogo />
        <ImeTools>
          {imeIcons.map(([label, icon]) => <ImeButton key={label} aria-label={label}>{icon}</ImeButton>)}
        </ImeTools>
      </ImeBar>
      <Toast role="status">录屏开始</Toast>
      <Pointer width="22" height="32">
        <path d="M2 2v24l6-5 4 8 4-2-4-8h7z" fill="#fff" stroke="#222" strokeWidth="1.500" />
      </Pointer>
    </Window>
  );
}
